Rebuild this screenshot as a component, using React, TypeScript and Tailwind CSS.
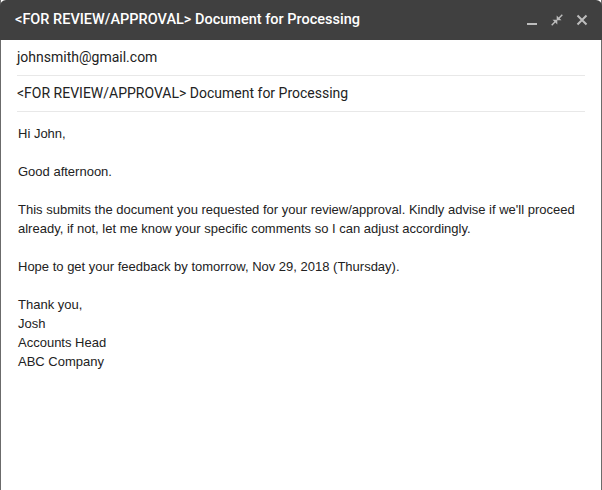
import React from 'react';

const bodyFont = { fontFamily: '"Liberation Sans", Arial, sans-serif' };

const App = () => {
  return (
    <div className="w-[602px] h-[490px] bg-white overflow-hidden" style={{ fontFamily: 'Roboto, "Noto Sans", sans-serif' }}>
      <div className="h-full flex flex-col border-x border-[#6b6b6b]">
        {/* Header */}
        <div className="h-10 shrink-0 bg-[#404040] rounded-t-[6px] flex items-center pl-[15px] pr-[14px] -mx-px">
          <div className="flex-1 text-white text-[14.5px] font-medium">
            &lt;FOR REVIEW/APPROVAL&gt; Document for Processing
          </div>
          <div className="flex items-center gap-[13px] text-[#bdbdbd]">
            <svg width="12" height="12" viewBox="0 0 12 12">
              <rect x="1" y="9" width="10" height="2" fill="currentColor" />
            </svg>
            <svg width="12" height="12" viewBox="0 0 12 12" fill="currentColor">
              <path d="M10.8 0.2 L11.8 1.2 L8.6 4.4 L10.5 6.3 L5.7 6.3 L5.7 1.5 L7.6 3.4 Z" />
              <path d="M1.2 11.8 L0.2 10.8 L3.4 7.6 L1.5 5.7 L6.3 5.7 L6.3 10.5 L4.4 8.6 Z" />
            </svg>
            <svg width="12" height="12" viewBox="0 0 12 12">
              <path d="M1.5 1.5 L10.5 10.5 M10.5 1.5 L1.5 10.5" stroke="currentColor" strokeWidth="2" />
            </svg>
          </div>
        </div>

        {/* Fields */}
        <div className="px-[16px]">
          <div className="h-[36px] flex items-center border-b border-[#e8e8e8] text-[14px] text-[#222]">
            johnsmith@gmail.com
          </div>
          <div className="h-[36px] flex items-center border-b border-[#e8e8e8] text-[14px] text-[#222]">
            &lt;FOR REVIEW/APPROVAL&gt; Document for Processing
          </div>
        </div>

        {/* Body */}
        <div className="px-[17px] pt-[12px] text-[13px] leading-[19px] text-[#222]" style={bodyFont}>
          <p>Hi John,</p>
          <p className="mt-[19px]">Good afternoon.</p>
          <p className="mt-[19px]">
            This submits the document you requested for your review/approval. Kindly advise if we'll proceed
            <br />
            already, if not, let me know your specific comments so I can adjust accordingly.
          </p>
          <p className="mt-[19px]">Hope to get your feedback by tomorrow, Nov 29, 2018 (Thursday).</p>
          <p className="mt-[19px]">
            Thank you,
            <br />
            Josh
            <br />
            Accounts Head
            <br />
            ABC Company
          </p>
        </div>
      </div>
    </div>
  );
};

export default App;
